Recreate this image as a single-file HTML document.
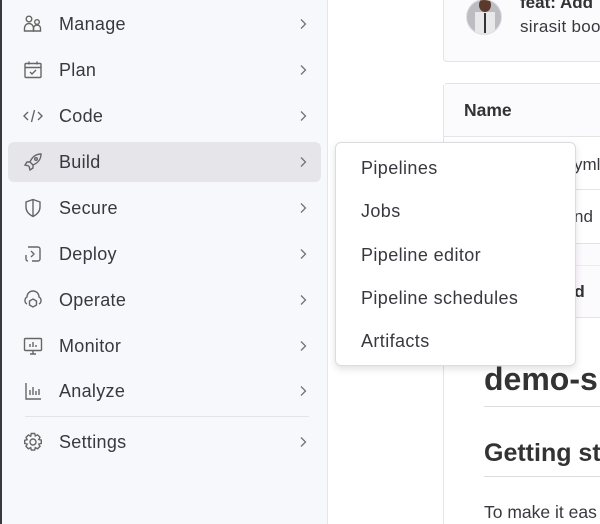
<!DOCTYPE html>
<html style="width:600px;height:524px;overflow:hidden"><head><style>
*{margin:0;padding:0;box-sizing:border-box}
body{width:600px;height:524px;overflow:hidden;background:#fff;font-family:"Liberation Sans",sans-serif;color:#333238;position:relative}
.strip{position:absolute;left:0;top:0;width:2px;height:524px;background:#3a3a3e}
.side{position:absolute;left:2px;top:0;width:326px;height:524px;background:#f7f8fb;border-right:1px solid #e6e6ea}
.item{position:absolute;left:6px;width:313px;height:40px;border-radius:6px}
.item.act{background:#e6e6ea}
.item svg.i{position:absolute;left:15px;top:10px}
.item .t{position:absolute;left:51px;top:10px;font-size:18px;letter-spacing:.3px;color:#3a383f}
.item svg.c{position:absolute;left:289px;top:14px}
.div{position:absolute;left:23px;top:416px;width:284px;height:1px;background:#e4e4e8}
.card{position:absolute;left:443px;border:1px solid #e4e4e8;border-radius:4px;background:#fbfafd}
.dd{position:absolute;left:335px;top:142px;width:241px;height:224px;background:#fff;border:1px solid #dcdcde;border-radius:6px;box-shadow:0 3px 8px rgba(0,0,0,.12)}
.dd div{position:absolute;left:25px;font-size:18px;letter-spacing:.4px;color:#3a383f}
</style></head><body>
<div class="strip"></div>
<div class="side">
<div class="item" style="top:4px"><svg class="i" width="20" height="20" viewBox="0 0 20 20" fill="none" stroke="#666" stroke-width="1.4"><circle cx="6" cy="5" r="2.8"/><path d="M1.5 17v-3a4.5 4.5 0 0 1 9 0v3z"/><circle cx="14" cy="8" r="2.3"/><path d="M10.5 17v-2.5a3.5 3.5 0 0 1 7 0V17z"/></svg><span class="t">Manage</span><svg class="c" width="12" height="12" viewBox="0 0 12 12" fill="none" stroke="#737278" stroke-width="1.3"><path d="M4 1.5l4.5 4.5L4 10.5"/></svg></div>
<div class="item" style="top:50px"><svg class="i" width="20" height="20" viewBox="0 0 20 20" fill="none" stroke="#666" stroke-width="1.4"><rect x="2" y="3.5" width="16" height="14" rx="1"/><path d="M2 7.5h16M6 1.5v3M14 1.5v3M7 12l2 2 4-4"/></svg><span class="t">Plan</span><svg class="c" width="12" height="12" viewBox="0 0 12 12" fill="none" stroke="#737278" stroke-width="1.3"><path d="M4 1.5l4.5 4.5L4 10.5"/></svg></div>
<div class="item" style="top:96px"><svg class="i" width="20" height="20" viewBox="0 0 20 20" fill="none" stroke="#666" stroke-width="1.4"><path d="M5 6l-4 4 4 4M15 6l4 4-4 4M11.5 4l-3 12"/></svg><span class="t">Code</span><svg class="c" width="12" height="12" viewBox="0 0 12 12" fill="none" stroke="#737278" stroke-width="1.3"><path d="M4 1.5l4.5 4.5L4 10.5"/></svg></div>
<div class="item act" style="top:142px"><svg class="i" width="20" height="20" viewBox="0 0 20 20" fill="none" stroke="#666" stroke-width="1.4"><path d="M18 2c-5 0-9 3-11 8l3 3c5-2 8-6 8-11zM7 10l-3 0-2 3 4 1M10 13v3l-3 2-1-4"/><circle cx="13" cy="7" r="1.3"/></svg><span class="t">Build</span><svg class="c" width="12" height="12" viewBox="0 0 12 12" fill="none" stroke="#737278" stroke-width="1.3"><path d="M4 1.5l4.5 4.5L4 10.5"/></svg></div>
<div class="item" style="top:188px"><svg class="i" width="20" height="20" viewBox="0 0 20 20" fill="none" stroke="#666" stroke-width="1.4"><path d="M10 1.5l7 2.5v5c0 4.5-3 7.5-7 9.5-4-2-7-5-7-9.5V4z M10 1.5v17"/></svg><span class="t">Secure</span><svg class="c" width="12" height="12" viewBox="0 0 12 12" fill="none" stroke="#737278" stroke-width="1.3"><path d="M4 1.5l4.5 4.5L4 10.5"/></svg></div>
<div class="item" style="top:234px"><svg class="i" width="20" height="20" viewBox="0 0 20 20" fill="none" stroke="#666" stroke-width="1.4"><path d="M5 3h10a2 2 0 0 1 2 2v10a2 2 0 0 1-2 2H9M3 11v4a2 2 0 0 0 2 2M8 7l3 3-3 3"/></svg><span class="t">Deploy</span><svg class="c" width="12" height="12" viewBox="0 0 12 12" fill="none" stroke="#737278" stroke-width="1.3"><path d="M4 1.5l4.5 4.5L4 10.5"/></svg></div>
<div class="item" style="top:280px"><svg class="i" width="20" height="20" viewBox="0 0 20 20" fill="none" stroke="#666" stroke-width="1.4"><path d="M4 14a4 4 0 0 1 0-7 6 6 0 0 1 12 0 4 4 0 0 1 0 7"/><path d="M10 9l3.5 2v4L10 17l-3.5-2v-4z"/></svg><span class="t">Operate</span><svg class="c" width="12" height="12" viewBox="0 0 12 12" fill="none" stroke="#737278" stroke-width="1.3"><path d="M4 1.5l4.5 4.5L4 10.5"/></svg></div>
<div class="item" style="top:326px"><svg class="i" width="20" height="20" viewBox="0 0 20 20" fill="none" stroke="#666" stroke-width="1.4"><rect x="1.5" y="2.5" width="17" height="12" rx="1"/><path d="M7 18h6M10 14.5V18M7 11V8M10 11V6M13 11V9"/></svg><span class="t">Monitor</span><svg class="c" width="12" height="12" viewBox="0 0 12 12" fill="none" stroke="#737278" stroke-width="1.3"><path d="M4 1.5l4.5 4.5L4 10.5"/></svg></div>
<div class="item" style="top:371px"><svg class="i" width="20" height="20" viewBox="0 0 20 20" fill="none" stroke="#666" stroke-width="1.4"><path d="M3 2v16h15M7 14V9M10 14V6M13 14V10M16 14V8"/></svg><span class="t">Analyze</span><svg class="c" width="12" height="12" viewBox="0 0 12 12" fill="none" stroke="#737278" stroke-width="1.3"><path d="M4 1.5l4.5 4.5L4 10.5"/></svg></div>
<div class="div"></div>
<div class="item" style="top:422px"><svg class="i" width="20" height="20" viewBox="0 0 20 20" fill="none" stroke="#666" stroke-width="1.4"><path d="M8.3 1.5h3.4l.6 2.5 2.3-1.2 2.4 2.4-1.2 2.3 2.5.6v3.4l-2.5.6 1.2 2.3-2.4 2.4-2.3-1.2-.6 2.5H8.3l-.6-2.5-2.3 1.2-2.4-2.4 1.2-2.3-2.5-.6V8.3l2.5-.6-1.2-2.3 2.4-2.4 2.3 1.2z"/><circle cx="10" cy="10" r="3"/></svg><span class="t">Settings</span><svg class="c" width="12" height="12" viewBox="0 0 12 12" fill="none" stroke="#737278" stroke-width="1.3"><path d="M4 1.5l4.5 4.5L4 10.5"/></svg></div>
</div>

<div class="card" style="top:-10px;width:170px;height:72px">
<div style="position:absolute;left:22px;top:8px;width:36px;height:36px;border-radius:50%;background:#bdbcc2;border:1px solid #e0e0e4;overflow:hidden"><div style="position:absolute;left:12px;top:-2px;width:12px;height:14px;border-radius:50%;background:#5a3a2a"></div><div style="position:absolute;left:8px;top:12px;width:20px;height:30px;background:#e8e8ea"></div><div style="position:absolute;left:17px;top:13px;width:2px;height:20px;background:#333"></div></div>
<div style="position:absolute;left:76px;top:2px;font-size:17px;font-weight:bold;color:#333">feat: Add</div>
<div style="position:absolute;left:76px;top:26px;font-size:17px;letter-spacing:.3px;color:#3a383f">sirasit boo</div>
</div>

<div class="card" style="top:83px;width:170px;height:460px;background:#fff">
<div style="position:absolute;left:0;top:0;right:0;height:53px;background:#fbfafd;border-bottom:1px solid #e4e4e8"></div>
<div style="position:absolute;left:20px;top:16px;font-size:17.5px;font-weight:bold;color:#333">Name</div>
<div style="position:absolute;left:0;right:0;top:105px;height:1px;background:#e4e4e8"></div>
<div style="position:absolute;left:130px;top:71px;font-size:17px;color:#3a383f">yml</div>
<div style="position:absolute;left:130px;top:123px;font-size:17px;color:#3a383f">nd</div>
<div style="position:absolute;left:0;right:0;top:159px;height:75px;background:#fbfafd;border-top:1px solid #e4e4e8;border-bottom:1px solid #e4e4e8"></div>
<div style="position:absolute;left:0;right:0;top:181px;height:1px;background:#ececf0"></div>
<div style="position:absolute;left:120px;top:198px;font-size:17px;font-weight:bold;color:#333">nd</div>
<div style="position:absolute;left:40px;top:277px;font-size:32px;font-weight:bold;color:#333">demo-si</div>
<div style="position:absolute;left:40px;right:0;top:322px;height:1px;background:#dcdcde"></div>
<div style="position:absolute;left:40px;top:355px;font-size:25px;font-weight:bold;color:#333">Getting st</div>
<div style="position:absolute;left:40px;right:0;top:392px;height:1px;background:#dcdcde"></div>
<div style="position:absolute;left:40px;top:418px;font-size:17.5px;color:#3a383f">To make it eas</div>
</div>

<div class="dd">
<div style="top:15px">Pipelines</div>
<div style="top:58px">Jobs</div>
<div style="top:102px">Pipeline editor</div>
<div style="top:145px">Pipeline schedules</div>
<div style="top:188px">Artifacts</div>
</div>
</body></html>
